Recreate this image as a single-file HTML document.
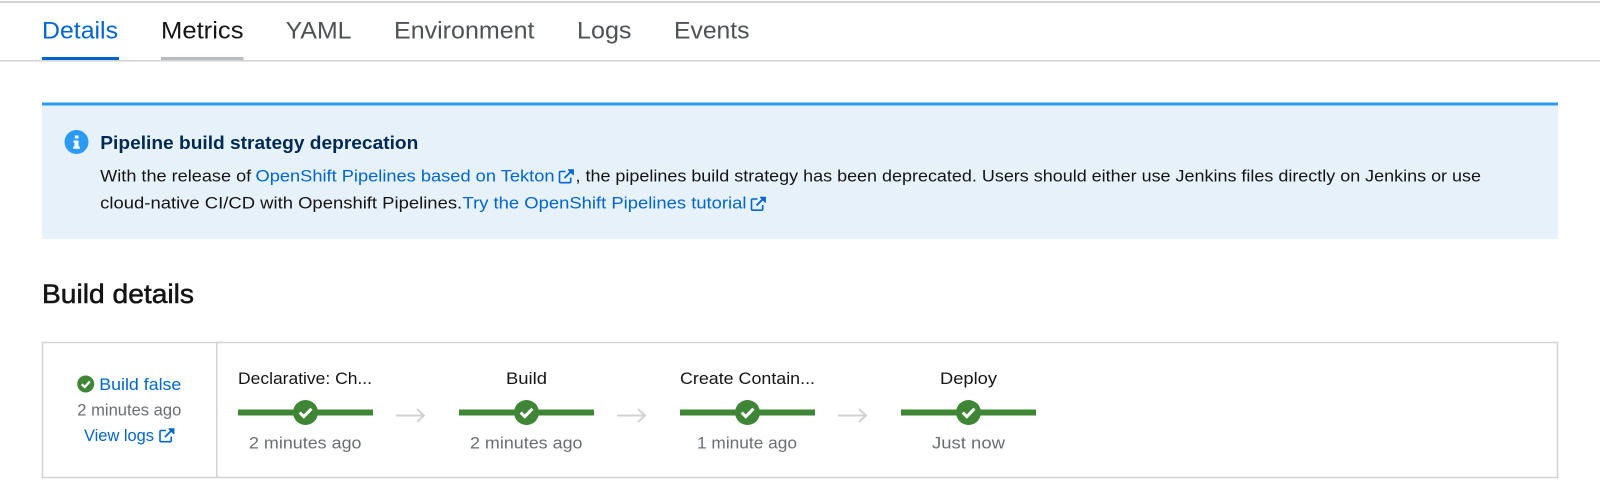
<!DOCTYPE html>
<html><head><meta charset="utf-8"><style>
html,body{margin:0;padding:0;background:#fff;width:1600px;height:488px;overflow:hidden}
svg{display:block}
text{font-family:"Liberation Sans",sans-serif;fill:#151515}
.t{font-size:24px}.b{font-size:17px}.l{fill:#06c}.g{fill:#6a6e73}
</style></head><body>
<svg width="1600" height="488" viewBox="0 0 1600 488" xmlns="http://www.w3.org/2000/svg">
<defs>
<g id="ext" fill="none" stroke="#06c" stroke-width="1.6"><path d="M7 3H2.200Q1 3 1 4.200V13Q1 14.200 2.200 14.200H11Q12.200 14.200 12.200 13V9"/><path d="M6 9.500L13.500 2" stroke-width="1.900"/><path d="M10 1.200H15V6.200H14.600L10 1.600Z" fill="#06c" stroke-width=".8"/></g>
<g id="stage"><rect x="0" y="409.500" width="135" height="6" fill="#3e8635"/><circle cx="67.500" cy="412.500" r="12.500" fill="#3e8635"/><path d="M61.700 412.600L65.800 416.600L73.400 408.800" fill="none" stroke="#fff" stroke-width="3"/></g>
<g id="arrow" fill="none" stroke="#d2d2d2" stroke-width="1.900"><path d="M396 415.500H424"/><path d="M417 409L424 415.500L417 422"/></g>
</defs>
<rect x="0" y="1" width="1600" height="2" fill="#d2d2d2"/>
<rect x="0" y="60" width="1600" height="1.500" fill="#d2d2d2"/>
<rect x="42" y="57" width="77" height="3" fill="#06c"/>
<rect x="161" y="57" width="82.500" height="3" fill="#b8bbbe"/>
<text class="t l" x="42" y="38.300" textLength="76" lengthAdjust="spacingAndGlyphs">Details</text>
<text class="t" x="161" y="38.300" textLength="82.500" lengthAdjust="spacingAndGlyphs">Metrics</text>
<text class="t" style="fill:#4f5255" x="285.700" y="38.300" textLength="65.800" lengthAdjust="spacingAndGlyphs">YAML</text>
<text class="t" style="fill:#4f5255" x="394" y="38.300" textLength="140.500" lengthAdjust="spacingAndGlyphs">Environment</text>
<text class="t" style="fill:#4f5255" x="577" y="38.300" textLength="54.500" lengthAdjust="spacingAndGlyphs">Logs</text>
<text class="t" style="fill:#4f5255" x="674" y="38.300" textLength="75.500" lengthAdjust="spacingAndGlyphs">Events</text>

<rect x="42" y="102.500" width="1516" height="136.500" fill="#e7f1fa"/>
<rect x="42" y="102.500" width="1516" height="3" fill="#2b9af3"/>
<circle cx="76.500" cy="142" r="12" fill="#2b9af3"/>
<path d="M74.800 135.500h3.800v3h-3.800zM73.500 140.500h5v6h1.300v2.200h-6.600v-2.200h1.300v-3.800h-1z" fill="#fff"/>
<text x="100.300" y="149" font-size="18" font-weight="700" style="fill:#002952" textLength="318" lengthAdjust="spacingAndGlyphs">Pipeline build strategy deprecation</text>
<text class="b" x="100.200" y="181.300" textLength="151" lengthAdjust="spacingAndGlyphs">With the release of</text>
<text class="b l" x="255.500" y="181.300" textLength="299" lengthAdjust="spacingAndGlyphs">OpenShift Pipelines based on Tekton</text>
<use href="#ext" x="558.500" y="168.500"/>
<text class="b" x="575.500" y="181.300" textLength="905.500" lengthAdjust="spacingAndGlyphs">, the pipelines build strategy has been deprecated. Users should either use Jenkins files directly on Jenkins or use</text>
<text class="b" x="100.200" y="208.700" textLength="362" lengthAdjust="spacingAndGlyphs">cloud-native CI/CD with Openshift Pipelines.</text>
<text class="b l" x="462.500" y="208.700" textLength="284" lengthAdjust="spacingAndGlyphs">Try the OpenShift Pipelines tutorial</text>
<use href="#ext" x="750.500" y="196"/>

<text x="42" y="303" font-size="27" style="stroke:#151515;stroke-width:.55" textLength="152" lengthAdjust="spacingAndGlyphs">Build details</text>

<rect x="42.500" y="342.500" width="1515" height="135" fill="none" stroke="#d2d2d2" stroke-width="1.500"/>
<rect x="216" y="342" width="1.500" height="136" fill="#d2d2d2"/>
<circle cx="85.700" cy="384" r="8.500" fill="#3e8635"/>
<path d="M81.700 384.200L84.700 387.100L89.800 381.500" fill="none" stroke="#fff" stroke-width="2.300"/>
<text class="b l" x="99.300" y="390" textLength="82" lengthAdjust="spacingAndGlyphs">Build false</text>
<text class="b g" x="77.300" y="415.700" textLength="104" lengthAdjust="spacingAndGlyphs">2 minutes ago</text>
<text class="b l" x="84" y="441" textLength="70" lengthAdjust="spacingAndGlyphs">View logs</text>
<use href="#ext" x="159" y="427.500"/>

<use href="#stage" x="238"/>
<text class="b" x="238" y="383.800" textLength="134" lengthAdjust="spacingAndGlyphs">Declarative: Ch...</text>
<text class="b g" x="249" y="448.500" textLength="112.500" lengthAdjust="spacingAndGlyphs">2 minutes ago</text>
<use href="#arrow"/>

<use href="#stage" x="459"/>
<text class="b" x="506" y="383.800" textLength="41" lengthAdjust="spacingAndGlyphs">Build</text>
<text class="b g" x="470" y="448.500" textLength="112.500" lengthAdjust="spacingAndGlyphs">2 minutes ago</text>
<use href="#arrow" x="221"/>

<use href="#stage" x="680"/>
<text class="b" x="680" y="383.800" textLength="135" lengthAdjust="spacingAndGlyphs">Create Contain...</text>
<text class="b g" x="697" y="448.500" textLength="100" lengthAdjust="spacingAndGlyphs">1 minute ago</text>
<use href="#arrow" x="442"/>

<use href="#stage" x="901"/>
<text class="b" x="940" y="383.800" textLength="57" lengthAdjust="spacingAndGlyphs">Deploy</text>
<text class="b g" x="932" y="448.500" textLength="73" lengthAdjust="spacingAndGlyphs">Just now</text>
</svg>
</body></html>
